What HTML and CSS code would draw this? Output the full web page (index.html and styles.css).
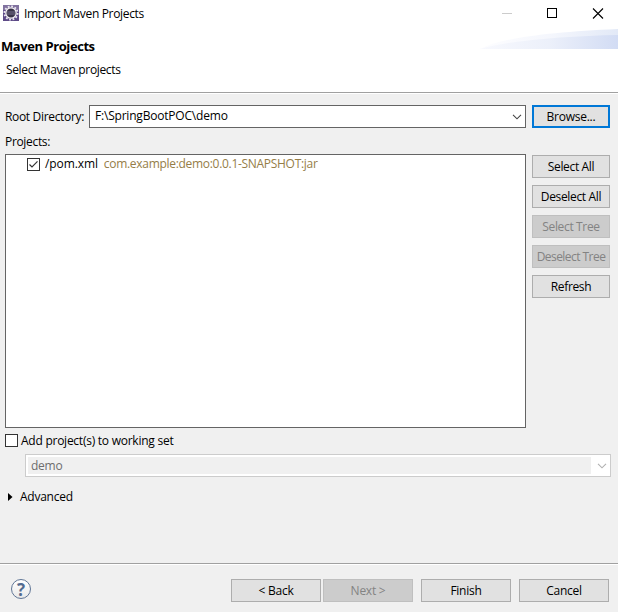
FILE: index.html
```html
<!DOCTYPE html>
<html lang="en">
<head>
<meta charset="utf-8">
<title>Import Maven Projects</title>
<link rel="stylesheet" href="styles.css">
</head>
<body>
<div class="dialog">
  <header class="banner">
    <svg class="wave" width="138" height="20" viewBox="0 0 138 20">
      <defs>
        <linearGradient id="g1"><stop offset="0" stop-color="#fdfdff"/><stop offset=".5" stop-color="#f5f7fd"/><stop offset="1" stop-color="#e2e9f7"/></linearGradient>
        <linearGradient id="g2"><stop offset="0" stop-color="#f8f9fe"/><stop offset=".5" stop-color="#ecf0fa"/><stop offset="1" stop-color="#d2dcf4"/></linearGradient>
      </defs>
      <path d="M0 20C20 9 70 3 138 0V20Z" fill="url(#g1)"/>
      <path d="M0 20C25 12 85 7 138 6V20Z" fill="url(#g2)"/>
    </svg>
    <div class="titlebar">
      <svg class="app" width="16" height="16" viewBox="0 0 16 16">
        <rect width="16" height="16" fill="#5d4a87"/>
        <path d="M0 0H16V5H0Z" fill="#81729f"/>
        <circle cx="8" cy="8" r="6.6" fill="none" stroke="#eeeaf2" stroke-width="1.8" stroke-dasharray="1.8 1.656"/>
        <circle cx="8" cy="8" r="5.2" fill="#393348" stroke="#f5f2f6" stroke-width="1.3"/>
        <path d="M4 7H12M4 9H12" stroke="#77708c"/>
      </svg>
      <span class="title">Import Maven Projects</span>
      <svg class="controls" width="104" height="12" viewBox="0 0 104 12" fill="none">
        <path d="M0 5.5H10" stroke="#ccc"/>
        <rect x="45.5" y=".5" width="9" height="9" stroke="#000"/>
        <path d="M91 .5L101 10.5M101 .5L91 10.5" stroke="#000" stroke-width="1.1"/>
      </svg>
    </div>
    <h1>Maven Projects</h1>
    <p>Select Maven projects</p>
  </header>
  <main>
    <div class="root">
      <label class="rootlabel">Root Directory:</label>
      <div class="combo"><span class="path">F:\SpringBootPOC\demo</span>
        <svg width="10" height="6" viewBox="0 0 10 6"><path d="M1 .8L5 4.8L9 .8" fill="none" stroke="#444" stroke-width="1.1"/></svg>
      </div>
      <button class="btn focus">Browse...</button>
    </div>
    <div class="projlabel"><span>Projects:</span></div>
    <div class="projects">
      <div class="list">
        <div class="item">
          <svg class="check" width="13" height="13" viewBox="0 0 13 13"><rect x=".5" y=".5" width="12" height="12" fill="#fff" stroke="#333"/><path d="M2.5 6.5L5 9L10.5 3.3" fill="none" stroke="#333" stroke-width="1.2"/></svg>
          <span class="pom">/pom.xml</span><span class="artifact">com.example:demo:0.0.1-SNAPSHOT:jar</span>
        </div>
      </div>
      <div class="side">
        <button class="btn">Select All</button>
        <button class="btn">Deselect All</button>
        <button class="btn" disabled>Select Tree</button>
        <button class="btn tight" disabled>Deselect Tree</button>
        <button class="btn">Refresh</button>
      </div>
    </div>
    <div class="working"><i class="box"></i><span>Add project(s) to working set</span></div>
    <div class="combo off"><div class="field"><span>demo</span></div>
      <svg width="10" height="6" viewBox="0 0 10 6"><path d="M1 .8L5 4.8L9 .8" fill="none" stroke="#b0b0b0" stroke-width="1.1"/></svg>
    </div>
    <div class="advanced"><svg width="5" height="8" viewBox="0 0 5 8"><path d="M0 0L4.5 4L0 8Z" fill="#000"/></svg><span>Advanced</span></div>
  </main>
  <footer>
    <div class="help"><span>?</span></div>
    <button class="btn">&lt; Back</button>
    <button class="btn next" disabled>Next &gt;</button>
    <button class="btn finish">Finish</button>
    <button class="btn cancel">Cancel</button>
  </footer>
</div>
</body>
</html>
```
FILE: styles.css
```css
* { box-sizing: border-box; }
body { margin: 0; background: #f0f0f0; }
.dialog {
  width: 618px; height: 612px; display: flex; flex-direction: column;
  font: 12px/16px "Open Sans", "Noto Sans", sans-serif; letter-spacing: -0.25px; color: #000;
  white-space: nowrap; overflow: hidden;
}
svg { display: block; flex: none; }
.banner { position: relative; height: 94px; background: #fff; border-bottom: 1px solid #fff; box-shadow: inset 0 -1px #a0a0a0; }
.wave { position: absolute; right: 0; top: 29px; }
.titlebar { display: flex; height: 28px; padding: 5px 12px 0 3px; }
.title { flex: 1; margin-left: 5px; letter-spacing: -0.33px; }
.controls { margin-top: 3px; }
.titlebar .title { line-height: 18px; }
h1 { margin: 9px 0 0 1px; font-size: 13px; line-height: 18px; font-weight: 700; letter-spacing: -0.43px; }
p { margin: 7px 0 0 6px; letter-spacing: -0.35px; }
main { flex: 1; padding: 11px 8px 0 5px; }
.root { display: flex; height: 23px; }
.rootlabel { width: 84px; line-height: 23px; letter-spacing: -0.33px; }
.combo { width: 437px; height: 23px; border: 1px solid #646464; background: #fff; display: flex; align-items: center; justify-content: space-between; padding: 0 3px 0 5px; }
.combo .path { line-height: 19px; margin-top: -2px; letter-spacing: -0.2px; }
.btn { font: inherit; letter-spacing: inherit; color: #000; width: 78px; height: 23px; padding: 0; border: 1px solid #adadad; background: #e1e1e1; line-height: 21px; }
.btn:disabled { background: #ccc; border-color: #bfbfbf; color: #838383; }
.btn.tight { letter-spacing: -0.55px; }
.focus { border: 2px solid #0078d7; line-height: 19px; margin-left: 6px; }
.projlabel { height: 26px; padding-top: 6px; letter-spacing: -0.33px; }
.projects { display: flex; gap: 6px; height: 274px; }
.list { width: 521px; border: 1px solid #646464; background: #fff; padding: 1px 0 0 21px; }
.item { display: flex; height: 17px; }
.check { margin-top: 2px; }
.pom { margin-left: 5px; letter-spacing: -0.1px; }
.artifact { margin-left: 6px; color: #957d47; letter-spacing: -0.3px; }
.side { display: flex; flex-direction: column; gap: 7px; padding-top: 1px; letter-spacing: -0.35px; }
.working { display: flex; align-items: center; height: 26px; gap: 3px; }
.box { width: 13px; height: 13px; margin-bottom: 1px; border: 1px solid #333; background: #fff; }
.combo.off { width: 586px; margin-left: 20px; border-color: #ccc; padding: 0 3px 0 2px; color: #6d6d6d; }
.field { width: 563px; height: 17px; background: #f0f0f0; padding-left: 3px; line-height: 17px; }
.advanced { display: flex; align-items: center; height: 16px; margin: 12px 0 0 3px; gap: 7px; }
footer { height: 49px; border-top: 1px solid #a0a0a0; box-shadow: inset 0 1px #fff; display: flex; padding: 15px 9px 0 11px; }
.help { width: 20px; height: 20px; border: 1px solid #607696; border-radius: 50%; text-align: center; font: bold 17px/19px "Open Sans", sans-serif; color: #526b90; margin-right: 200px; background: linear-gradient(#fff, #e9e9e9); letter-spacing: 0; }
footer .btn { width: 90px; flex: none; }
.next { margin-left: 2px; }
.finish, .cancel { margin-left: 8px; }
```
